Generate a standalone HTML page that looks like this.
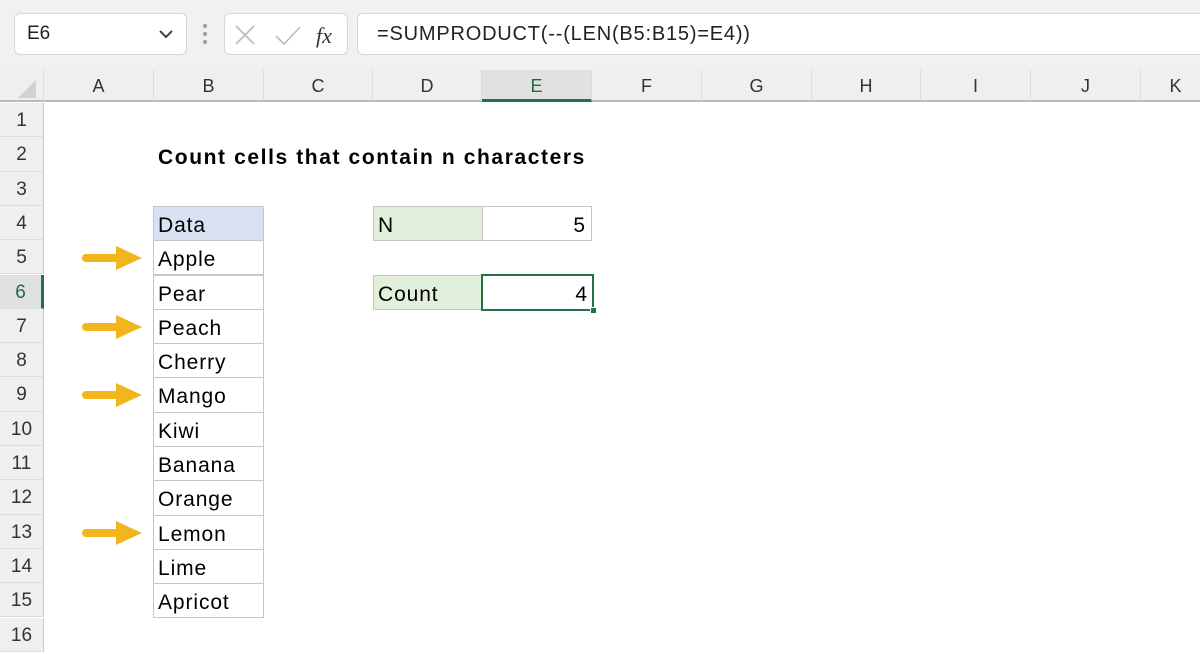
<!DOCTYPE html>
<html><head><meta charset="utf-8"><style>
*{margin:0;padding:0;box-sizing:border-box}
body{width:1200px;height:630px;overflow:hidden;background:#fff;font-family:"Liberation Sans","DejaVu Sans",sans-serif;position:relative;color:#000}
.a{position:absolute}
.top{left:0;top:0;width:1200px;height:70px;background:#f1f1f1}
.box{background:#fff;border:1px solid #d6d6d6;border-radius:6px}
.colh{top:70px;height:32px;background:#efefef;border-bottom:2px solid #b9b9b9;font-size:18px;color:#333;text-align:center;line-height:32px;border-right:1px solid #dcdcdc}
.rowh{left:0;width:44px;background:#efefef;border-right:1px solid #c8c8c8;border-bottom:1px solid #dcdcdc;font-size:19px;color:#333;text-align:center}
.cell{border:1px solid #c6c6c6;font-size:21px;letter-spacing:0.9px;padding-left:4px;white-space:nowrap}
</style></head><body>
<div class="a top"></div>
<div class="a box" style="left:14px;top:13px;width:173px;height:42px"></div>
<div class="a" style="left:27px;top:23px;font-size:19px;color:#222">E6</div>
<svg class="a" style="left:158px;top:28px" width="16" height="12"><path d="M2 3 L8 9 L14 3" fill="none" stroke="#444" stroke-width="2"/></svg>
<div class="a" style="left:203px;top:24px;width:4px;height:4px;background:#999;border-radius:2px"></div>
<div class="a" style="left:203px;top:32px;width:4px;height:4px;background:#999;border-radius:2px"></div>
<div class="a" style="left:203px;top:40px;width:4px;height:4px;background:#999;border-radius:2px"></div>
<div class="a box" style="left:224px;top:13px;width:124px;height:42px"></div>
<svg class="a" style="left:234px;top:24px" width="110" height="24"><path d="M2 2 L20 20 M20 2 L2 20" stroke="#bbb" stroke-width="1.6"/><path d="M42 12 L50 20 L66 3" fill="none" stroke="#bbb" stroke-width="1.6"/><text x="82" y="19" font-family="Liberation Serif,serif" font-style="italic" font-size="22" fill="#333">fx</text></svg>
<div class="a box" style="left:357px;top:13px;width:860px;height:42px"></div>
<div class="a" style="left:377px;top:23px;font-size:20px;color:#222;letter-spacing:0.8px">=SUMPRODUCT(--(LEN(B5:B15)=E4))</div>
<div class="a colh" style="left:0;width:44px;background:#efefef"></div>
<svg class="a" style="left:16px;top:80px" width="22" height="20"><path d="M20 0 L20 18 L2 18 Z" fill="#d2d2d2"/></svg>
<div class="a colh" style="left:44px;width:110px">A</div>
<div class="a colh" style="left:154px;width:110px">B</div>
<div class="a colh" style="left:264px;width:109px">C</div>
<div class="a colh" style="left:373px;width:109px">D</div>
<div class="a colh" style="left:482px;width:110px;background:#e1e1e1;color:#1e6b41;border-bottom:3px solid #217346">E</div>
<div class="a colh" style="left:592px;width:110px">F</div>
<div class="a colh" style="left:702px;width:110px">G</div>
<div class="a colh" style="left:812px;width:109px">H</div>
<div class="a colh" style="left:921px;width:110px">I</div>
<div class="a colh" style="left:1031px;width:110px">J</div>
<div class="a colh" style="left:1141px;width:70px">K</div>
<div id="rows"></div>
<div class="a" style="left:158px;top:146px;font-size:21px;font-weight:bold;letter-spacing:1.6px;white-space:nowrap">Count cells that contain n characters</div>
<div class="a cell" style="left:153px;top:206px;width:111px;height:35px;background:#d9e1f2;line-height:38px">Data</div>
<div class="a cell" style="left:373px;top:206px;width:110px;height:35px;background:#e2efda;line-height:38px">N</div>
<div class="a cell" style="left:482px;top:206px;width:110px;height:35px;text-align:right;padding-right:5px;line-height:38px">5</div>
<div class="a cell" style="left:373px;top:275px;width:110px;height:35px;background:#e2efda;line-height:38px">Count</div>
<div class="a" style="left:481px;top:274px;width:113px;height:37px;border:2px solid #217346;font-size:21px;text-align:right;padding-right:5px;line-height:37px">4</div>
<div class="a" style="left:590px;top:307px;width:7px;height:7px;background:#217346;border:1px solid #fff"></div>
<script>
var fr=["Apple","Pear","Peach","Cherry","Mango","Kiwi","Banana","Orange","Lemon","Lime","Apricot"];
var h="";
for(var i=1;i<=16;i++){var t=103+(i-1)*34.3;
var sel=i==6;
h+='<div class="a rowh" style="top:'+t+'px;height:34.3px;line-height:36px;'+(sel?'background:#e1e1e1;color:#1e6b41;border-right:3px solid #217346':'')+'">'+i+'</div>';}
for(var j=0;j<11;j++){var t=103+(4+j)*34.3;
h+='<div class="a cell" style="left:153px;top:'+t+'px;width:111px;height:35.3px;line-height:38px">'+fr[j]+'</div>';}
[5,7,9,13].forEach(function(r){var c=103+(r-1)*34.3+17;
h+='<svg class="a" style="left:80px;top:'+(c-12)+'px" width="64" height="26"><path d="M6 13 L38 13" stroke="#f2b51d" stroke-width="8" stroke-linecap="round"/><path d="M36 1 L62 13 L36 25 Z" fill="#f2b51d"/></svg>';});
document.getElementById("rows").innerHTML=h;
</script>
</body></html>
